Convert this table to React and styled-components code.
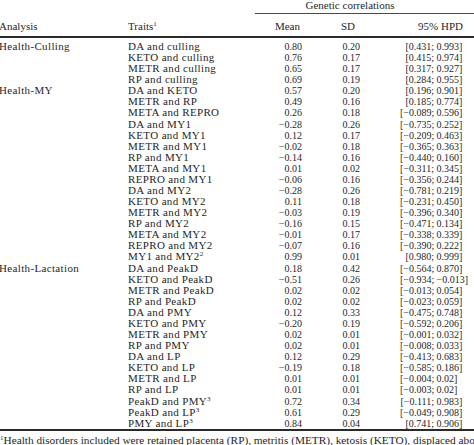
import React from 'react';
import styled, { createGlobalStyle } from 'styled-components';

const GlobalStyle = createGlobalStyle`
  html, body {
    margin: 0;
    padding: 0;
    background: #ffffff;
  }
  body {
    font-family: 'Liberation Serif', 'Times New Roman', serif;
    color: #1f1f1f;
    overflow: hidden;
  }
`;

const COLS = '128px 127px 49px 66px 104px';

const Table = styled.div`
  width: 474px;
  font-size: 11px;
`;

const TopRow = styled.div`
  display: grid;
  grid-template-columns: ${COLS};
  height: 14px;
`;

const Spanner = styled.div`
  grid-column: 3 / 6;
  border-bottom: 1px solid #4a4a4a;
  text-align: center;
  padding-right: 29px;
  line-height: 11px;
`;

const HeadRow = styled.div`
  display: grid;
  grid-template-columns: ${COLS};
  padding: 7px 0 3.5px;
  line-height: 11px;
  border-bottom: 2px solid #2a2a2a;
`;

const Body = styled.div`
  padding: 3.5px 0 0.5px;
  border-bottom: 2px solid #2a2a2a;
`;

const Row = styled.div`
  display: grid;
  grid-template-columns: ${COLS};
  height: 11.09px;
  line-height: 11.09px;
  white-space: nowrap;
`;

const Cell = styled.div`
  text-align: ${(p) => p.align || 'left'};
  padding-right: ${(p) => p.pr || 0}px;
  margin-left: ${(p) => p.ml || 0}px;
  letter-spacing: ${(p) => p.ls || 0}px;
`;

const Num = styled(Cell)`
  font-size: 10px;
`;

const Hpd = styled.div`
  display: flex;
  font-size: 10px;
  padding-left: 30px;
`;

const Lo = styled.span`
  width: 34px;
  text-align: right;
`;

const Hi = styled.span`
  padding-left: 2.5px;
`;

const Sup = styled.sup`
  font-size: 7px;
  line-height: 0;
  vertical-align: baseline;
  position: relative;
  top: -4px;
  letter-spacing: 0;
`;

const Note = styled.div`
  padding-top: 4px;
  line-height: 11px;
  font-size: 11.3px;
  white-space: nowrap;
`;

const rows = [
  ['Health-Culling', 'DA and culling', '0.80', '0.20', '[0.431;', '0.993]'],
  ['', 'KETO and culling', '0.76', '0.17', '[0.415;', '0.974]'],
  ['', 'METR and culling', '0.65', '0.17', '[0.317;', '0.927]'],
  ['', 'RP and culling', '0.69', '0.19', '[0.284;', '0.955]'],
  ['Health-MY', 'DA and KETO', '0.57', '0.20', '[0.196;', '0.901]'],
  ['', 'METR and RP', '0.49', '0.16', '[0.185;', '0.774]'],
  ['', 'META and REPRO', '0.26', '0.18', '[−0.089;', '0.596]'],
  ['', 'DA and MY1', '−0.28', '0.26', '[−0.735;', '0.252]'],
  ['', 'KETO and MY1', '0.12', '0.17', '[−0.209;', '0.463]'],
  ['', 'METR and MY1', '−0.02', '0.18', '[−0.365;', '0.363]'],
  ['', 'RP and MY1', '−0.14', '0.16', '[−0.440;', '0.160]'],
  ['', 'META and MY1', '0.01', '0.02', '[−0.311;', '0.345]'],
  ['', 'REPRO and MY1', '−0.06', '0.16', '[−0.356;', '0.244]'],
  ['', 'DA and MY2', '−0.28', '0.26', '[−0.781;', '0.219]'],
  ['', 'KETO and MY2', '0.11', '0.18', '[−0.231;', '0.450]'],
  ['', 'METR and MY2', '−0.03', '0.19', '[−0.396;', '0.340]'],
  ['', 'RP and MY2', '−0.16', '0.15', '[−0.471;', '0.134]'],
  ['', 'META and MY2', '−0.01', '0.17', '[−0.338;', '0.339]'],
  ['', 'REPRO and MY2', '−0.07', '0.16', '[−0.390;', '0.222]'],
  ['', 'MY1 and MY2', '0.99', '0.01', '[0.980;', '0.999]', '2'],
  ['Health-Lactation', 'DA and PeakD', '0.18', '0.42', '[−0.564;', '0.870]'],
  ['', 'KETO and PeakD', '−0.51', '0.26', '[−0.934;', '−0.013]'],
  ['', 'METR and PeakD', '0.02', '0.02', '[−0.013;', '0.054]'],
  ['', 'RP and PeakD', '0.02', '0.02', '[−0.023;', '0.059]'],
  ['', 'DA and PMY', '0.12', '0.33', '[−0.475;', '0.748]'],
  ['', 'KETO and PMY', '−0.20', '0.19', '[−0.592;', '0.206]'],
  ['', 'METR and PMY', '0.02', '0.01', '[−0.001;', '0.032]'],
  ['', 'RP and PMY', '0.02', '0.01', '[−0.008;', '0.033]'],
  ['', 'DA and LP', '0.12', '0.29', '[−0.413;', '0.683]'],
  ['', 'KETO and LP', '−0.19', '0.18', '[−0.585;', '0.186]'],
  ['', 'METR and LP', '0.01', '0.01', '[−0.004;', '0.02]'],
  ['', 'RP and LP', '0.01', '0.01', '[−0.003;', '0.02]'],
  ['', 'PeakD and PMY', '0.72', '0.34', '[−0.111;', '0.983]', '3'],
  ['', 'PeakD and LP', '0.61', '0.29', '[−0.049;', '0.908]', '3'],
  ['', 'PMY and LP', '0.84', '0.04', '[0.741;', '0.906]', '3'],
];

export default function App() {
  return (
    <Table>
      <GlobalStyle />
      <TopRow>
        <Spanner>Genetic correlations</Spanner>
      </TopRow>
      <HeadRow>
        <Cell ml={-1}>Analysis</Cell>
        <Cell>
          Traits<Sup>1</Sup>
        </Cell>
        <Cell align="right" pr={4}>Mean</Cell>
        <Cell align="right" pr={15}>SD</Cell>
        <Cell align="right" pr={11}>95% HPD</Cell>
      </HeadRow>
      <Body>
        {rows.map(([group, trait, mean, sd, lo, hi, note], i) => (
          <Row key={i}>
            <Cell ml={-1} ls={0.35}>{group}</Cell>
            <Cell ls={0.35}>
              {trait}
              {note && <Sup>{note}</Sup>}
            </Cell>
            <Num align="right" pr={2}>{mean}</Num>
            <Num align="right" pr={10}>{sd}</Num>
            <Hpd>
              <Lo>{lo}</Lo>
              <Hi>{hi}</Hi>
            </Hpd>
          </Row>
        ))}
      </Body>
      <Note>
        <Sup>1</Sup>Health disorders included were retained placenta (RP), metritis (METR), ketosis (KETO), displaced abomasum (DA),
      </Note>
    </Table>
  );
}
